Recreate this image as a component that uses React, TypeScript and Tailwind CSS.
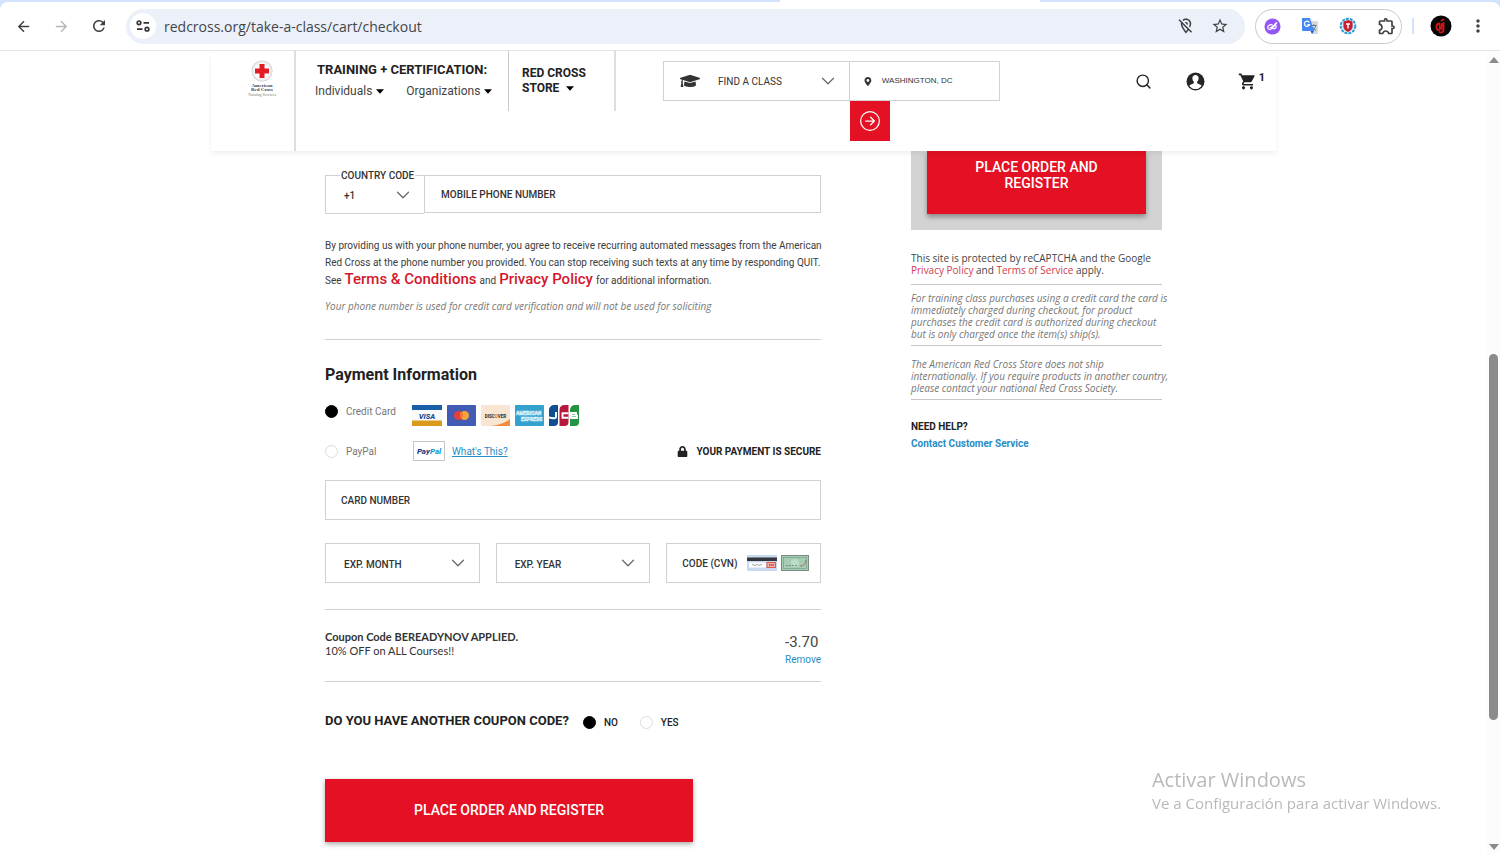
import {
  MdArrowBack,
  MdArrowForward,
  MdMoreVert,
  MdOutlineExtension,
  MdOutlineLocationOff,
  MdRefresh,
  MdShoppingCart,
  MdStarBorder,
} from "react-icons/md";
import { FaGraduationCap, FaLock, FaMapMarkerAlt } from "react-icons/fa";
import { BsArrowRightCircle } from "react-icons/bs";
import { ChevronDown, Search } from "lucide-react";

function TuneIcon() {
  return (
    <svg width="14" height="12" viewBox="0 0 14 12" fill="none" stroke="#333" strokeWidth="1.7" aria-hidden="true">
      <circle cx="3" cy="2.8" r="1.8" />
      <path d="M7.5 2.8H13M1 9.2h5.5" />
      <circle cx="11" cy="9.2" r="1.8" />
    </svg>
  );
}

function BrowserBar() {
  return (
    <div className="shrink-0 border-b border-[#e4e4e6] bg-[#d3e3fd]">
      <div className="flex h-[2px]">
        <div className="ml-[52%] h-full w-[260px] bg-white" />
      </div>
      <div className="flex h-12 items-center rounded-t-lg bg-white pr-3 pl-[15px] text-[#3c3f43]">
        <button aria-label="Back" className="w-[38px]"><MdArrowBack size={17} /></button>
        <button aria-label="Forward" className="w-[37px] text-[#b5b6b8]"><MdArrowForward size={17} /></button>
        <button aria-label="Reload" className="w-[36px]"><MdRefresh size={18} /></button>
        <div className="flex h-[35px] flex-1 items-center rounded-full bg-[#ebf0f9] pr-4 pl-1">
          <button aria-label="Site information" className="flex size-[26px] items-center justify-center rounded-full bg-white">
            <TuneIcon />
          </button>
          <input
            aria-label="Address"
            defaultValue="redcross.org/take-a-class/cart/checkout"
            className="ml-2 flex-1 font-['Open_Sans',sans-serif] text-[14px] text-[#43464a]"
          />
          <button aria-label="Location blocked" className="mr-4"><MdOutlineLocationOff size={18} /></button>
          <button aria-label="Bookmark"><MdStarBorder size={18} /></button>
        </div>
        <div className="ml-[10px] flex h-[35px] items-center gap-5 rounded-full border border-[#c9cacc] px-2">
          <svg width="17" height="17" viewBox="0 0 18 18" aria-hidden="true">
            <circle cx="9" cy="9" r="8.5" fill="#9457f5" />
            <g fill="none" stroke="#fff" strokeWidth="1.3" strokeLinecap="round">
              <path d="M9 7.4C6.500 6.300 3.500 8.400 4 10.700c.5 2 3.700 1.800 5-.2l3.500-5" />
              <path d="M6.500 10.200c2 .5 3-2.400 5.500-2.200 1.500.2 1 2.300-.5 3-1.500.6-2.500-.2-2.500-.2M13.500 5l-2 3" />
            </g>
          </svg>
          <svg width="18" height="18" viewBox="0 0 18 18" aria-hidden="true">
            <path d="M7 4h9a1 1 0 0 1 1 1v11a1 1 0 0 1-1 1h-5z" fill="#d5d9e0" />
            <path d="M10.500 8.500h5M13 7v1.500m1.800 0c-.3 2.500-2 4-3.500 5m.2-3.500c.8 1.600 2 2.700 3.500 3.500" fill="none" stroke="#657a92" />
            <path d="M1 1h8l4 13H2a1 1 0 0 1-1-1z" fill="#4688f1" />
            <path d="M11 17l2-3H9.500z" fill="#2c56b8" />
            <path d="M8.300 5.500A2.600 2.600 0 1 0 8.500 7.500H6.300" fill="none" stroke="#fff" strokeWidth="1.200" />
          </svg>
          <svg width="18" height="18" viewBox="0 0 18 18" aria-hidden="true">
            <circle cx="9" cy="9" r="7.300" fill="none" stroke="#249ad9" strokeWidth="2" strokeDasharray="3 1" />
            <circle cx="9" cy="9" r="5.800" fill="#a9d9ef" />
            <path d="M4.500 4.500L9 3l4.500 1.500v5C13.500 12 11.500 14 9 15c-2.500-1-4.500-3-4.500-5.500z" fill="#c91f32" />
            <path d="M7 7h4M9 7v4.500" stroke="#fff" strokeWidth="1.400" />
          </svg>
          <MdOutlineExtension size={20} className="-mr-1" />
        </div>
        <div className="mx-[10px] h-4 w-[2px] bg-[#d3e3fd]" />
        <svg width="22" height="22" viewBox="0 0 22 22" className="ml-[6px]" aria-hidden="true">
          <circle cx="11" cy="11" r="10.500" fill="#050505" />
          <g fill="none" stroke="#d51414" strokeWidth="1.900" strokeLinecap="round">
            <path d="M9.500 8.500c-2-.5-3.500 2-3 4.500s3 2.500 3.500.5l-.5-5M13.500 8v7c0 2-2 3-4 2" />
            <path d="M11.500 5.500l2-1M12 9l-.5 5" />
          </g>
        </svg>
        <button aria-label="Browser menu" className="ml-4"><MdMoreVert size={20} /></button>
      </div>
    </div>
  );
}

function Caret() {
  return (
    <svg width="8" height="5" viewBox="0 0 8 5" className="inline-block" aria-hidden="true">
      <path d="M0 .3h8L4 4.700z" fill="#000" />
    </svg>
  );
}

function SiteHeader() {
  return (
    <header className="relative z-10 mx-auto flex h-[100px] w-full max-w-[1065px] bg-white shadow-[0_3px_5px_rgba(0,0,0,0.06)]">
      <a href="#home" aria-label="American Red Cross Training Services" className="flex w-[85px] justify-end border-r-2 border-[#dedede] pt-2 pr-[17px]">
        <svg width="30" height="40" viewBox="0 0 30 40" aria-hidden="true">
          <defs>
            <radialGradient id="badge">
              <stop offset="65%" stopColor="#fff" />
              <stop offset="90%" stopColor="#e8e8e8" />
              <stop offset="100%" stopColor="#c4c4c4" />
            </radialGradient>
          </defs>
          <circle cx="15" cy="12" r="10.500" fill="url(#badge)" />
          <path d="M12.500 5h5v4.500H22v5h-4.500V19h-5v-4.500H8v-5h4.500z" fill="#e31b23" />
          <g textAnchor="middle" fontFamily="Liberation Serif, serif" fontWeight="700" fill="#444">
            <text x="15" y="28" fontSize="5">American</text>
            <text x="15" y="32" fontSize="5">Red Cross</text>
            <text x="15" y="37" fontSize="4" fontWeight="400" fill="#777">Training Services</text>
          </g>
        </svg>
      </a>
      <nav aria-label="Main" className="flex h-[60px]">
        <div className="w-[213px] border-r border-[#c8c8c8] pt-[11px] pl-[19px]">
          <p className="pl-[2px] text-[13px] leading-4 font-bold whitespace-nowrap">TRAINING + CERTIFICATION:</p>
          <div className="mt-1 flex gap-[22px] text-[12px] leading-[18px] text-[#444]">
            <button className="flex items-center gap-1">Individuals <Caret /></button>
            <button className="flex items-center gap-1">Organizations <Caret /></button>
          </div>
        </div>
        <button className="w-[107px] border-r-2 border-[#dedede] pl-[13px] text-left text-[12px] leading-[15px] font-bold">
          RED CROSS<br />STORE <span className="ml-1"><Caret /></span>
        </button>
      </nav>
      <form className="mt-[10px] ml-[47px] flex w-[337px] flex-col self-start" onSubmit={(e) => e.preventDefault()}>
        <div className="flex h-10 border border-[#d2d2d2] text-[#333]">
          <div className="relative flex w-[186px] items-center border-r border-[#d2d2d2]">
            <FaGraduationCap size={20} className="absolute left-4" />
            <select aria-label="Find a class" className="h-full w-full appearance-none pl-[54px] text-[10px]">
              <option>FIND A CLASS</option>
            </select>
            <ChevronDown size={22} strokeWidth={1.3} className="pointer-events-none absolute right-[10px] text-[#666]" />
          </div>
          <label className="flex min-w-0 flex-1 items-center gap-[10px] pl-[14px]">
            <FaMapMarkerAlt size={9} />
            <input aria-label="Location" defaultValue="WASHINGTON, DC" className="w-full min-w-0 font-['Liberation_Sans',Arial,sans-serif] text-[8px]" />
          </label>
        </div>
        <button aria-label="Search classes" className="ml-[187px] flex size-10 items-center justify-center bg-[#e31123] text-white">
          <BsArrowRightCircle size={20} />
        </button>
      </form>
      <div className="mr-[11px] ml-auto flex h-[60px] items-center text-[#222]">
        <button aria-label="Search" className="mr-[34px]"><Search size={17} strokeWidth={2} /></button>
        <button aria-label="Account" className="mr-[33px]">
          <svg width="19" height="19" viewBox="0 0 19 19" aria-hidden="true">
            <circle cx="9.500" cy="9.500" r="9" fill="#262626" />
            <path d="M9.500 3c-2 0-3.300 1.500-3.100 3.500.1 1.500.7 2.700 1.500 3.300v1.300c-.4.900-3.600 1.200-4.600 2.700a7.600 7.600 0 0 0 12.400 0c-1-1.500-4.200-1.800-4.600-2.700V9.800c.8-.6 1.400-1.800 1.500-3.300C12.800 4.500 11.500 3 9.500 3z" fill="#fff" />
          </svg>
        </button>
        <button aria-label="Cart, 1 item" className="flex gap-[2px]">
          <MdShoppingCart size={19} />
          <span className="text-[11px] leading-3 font-bold">1</span>
        </button>
      </div>
    </header>
  );
}

const field = "border border-[#d0d0d0] bg-white text-[10px] font-medium text-[#333]";

function SelectBox({ id, label, floating, option, className }: { id: string; label: string; floating?: boolean; option: string; className: string }) {
  return (
    <div className={`relative flex items-center ${field} ${className}`}>
      {floating && (
        <label htmlFor={id} className="absolute -top-2 left-[14px] bg-white px-px leading-4 whitespace-nowrap">{label}</label>
      )}
      <select id={id} aria-label={label} className="h-full w-full appearance-none pt-[2px] pl-[18px]">
        <option>{option}</option>
      </select>
      <ChevronDown size={22} strokeWidth={1.3} className="pointer-events-none absolute right-[10px] text-[#666]" />
    </div>
  );
}

function Radio({ id, name, checked }: { id: string; name: string; checked?: boolean }) {
  return (
    <input
      id={id}
      name={name}
      type="radio"
      defaultChecked={checked}
      className="size-[13px] shrink-0 appearance-none rounded-full border border-[#dcdcdc] checked:border-black checked:bg-black"
    />
  );
}

function CardLogos() {
  return (
    <div className="flex gap-[5px]">
      <svg width="30" height="21" viewBox="0 0 30 21" role="img" aria-label="Visa">
        <path d="M0 0h30v21H0z" fill="#fafafa" />
        <path d="M0 0h30v5H0z" fill="#195fa8" />
        <path d="M0 15.500h30V21H0z" fill="#dc9a1c" />
        <text x="15" y="13.500" fontSize="7.500" fontWeight="800" fontStyle="italic" textAnchor="middle" fill="#174b96">VISA</text>
      </svg>
      <svg width="29" height="21" viewBox="0 0 29 21" role="img" aria-label="Mastercard">
        <rect width="29" height="21" rx="1" fill="#425bb5" />
        <circle cx="11.500" cy="10.500" r="4.500" fill="#e63f38" />
        <circle cx="17.500" cy="10.500" r="4.500" fill="#f5a33a" />
        <path d="M14.500 7.200a4.500 4.500 0 0 1 0 6.600 4.500 4.500 0 0 1 0-6.600z" fill="#f0703a" />
      </svg>
      <svg width="29" height="21" viewBox="0 0 29 21" role="img" aria-label="Discover">
        <rect width="29" height="21" rx="1" fill="#f8e6d3" />
        <path d="M29 14v7H9c8-.5 15-3 20-7z" fill="#f58a3c" />
        <text x="14.500" y="12.500" fontSize="4.500" fontWeight="800" textAnchor="middle" fill="#38322f">DISC<tspan fill="#ef6b21">O</tspan>VER</text>
      </svg>
      <svg width="29" height="21" viewBox="0 0 29 21" role="img" aria-label="American Express">
        <rect width="29" height="21" rx="1" fill="#35a1cf" />
        <g fontSize="5" fontWeight="700" fill="none" stroke="#d8f1fb" strokeWidth=".6">
          <text x="1" y="9.500">AMERICAN</text>
          <text x="6" y="15.500">EXPRESS</text>
        </g>
      </svg>
      <svg width="30" height="21" viewBox="0 0 30 21" role="img" aria-label="JCB">
        <path d="M5 0h4v17a4 4 0 0 1-4 4H0V5a5 5 0 0 1 5-5z" fill="#124f91" />
        <path d="M15 0h4.500v17a4 4 0 0 1-4 4h-5V5a5 5 0 0 1 4.500-5z" fill="#b5173d" />
        <path d="M26 0h4v17a4 4 0 0 1-4 4h-5V5a5 5 0 0 1 5-5z" fill="#239344" />
        <g fill="none" stroke="#fff" strokeWidth="1.900">
          <path d="M7 7v5c0 1.500-3 1.800-7 .5M19.500 8.300h-6v4.400h6M22 8h5v2.500h-5H28V13h-6z" />
        </g>
      </svg>
    </div>
  );
}

function CvnPictures() {
  return (
    <div className="flex gap-1">
      <svg width="30" height="16" viewBox="0 0 30 16" aria-hidden="true">
        <path d="M0 0h30v16H0z" fill="#c9daf0" />
        <path d="M0 2.500h30V6H0z" fill="#33363b" />
        <path d="M2 7.500h17v5H2z" fill="#fff" />
        <path d="M5 10q1-1 2 0t2 0 2 0 2 0 2 0" fill="none" stroke="#888" strokeWidth=".8" />
        <rect x="20" y="7.500" width="8.500" height="5" fill="#f2b2a7" stroke="#dd5b48" />
        <path d="M22 10h5" stroke="#b8402f" strokeWidth="1.500" strokeDasharray="1.300 .5" />
      </svg>
      <svg width="28" height="16" viewBox="0 0 28 16" aria-hidden="true">
        <rect x=".5" y=".5" width="27" height="15" fill="#a5cdb5" stroke="#7d8a84" />
        <rect x="2.500" y="2.500" width="23" height="11" fill="none" stroke="#7aa28b" strokeWidth=".7" />
        <circle cx="14" cy="8" r="4" fill="#b9dcc7" />
        <path d="M5 10.500h12" stroke="#567866" strokeWidth=".7" strokeDasharray="2 1" />
        <path d="M19 11c4 0 5-2 6-6" fill="none" stroke="#a86c55" />
      </svg>
    </div>
  );
}

function CheckoutForm() {
  return (
    <form className="w-[496px]" onSubmit={(e) => e.preventDefault()}>
      <div className="flex items-start">
        <SelectBox id="country" label="COUNTRY CODE" floating option="+1" className="h-[39px] w-[99px] border-r-0" />
        <input aria-label="Mobile phone number" placeholder="MOBILE PHONE NUMBER" className={`h-[38px] flex-1 px-4 placeholder:text-[#333] ${field}`} />
      </div>
      <div className="mt-[23px] text-[10px] leading-[17px] whitespace-nowrap text-[#3c3c3c]">
        <p>
          By providing us with your phone number, you agree to receive recurring automated messages from the American<br />
          Red Cross at the phone number you provided. You can stop receiving such texts at any time by responding QUIT.
        </p>
        <p className="flex items-baseline gap-[3px]">
          See
          <a href="#terms" className="text-[15px] font-medium text-[#d3172b]">Terms &amp; Conditions</a>
          and
          <a href="#privacy" className="text-[15px] font-medium text-[#d3172b]">Privacy Policy</a>
          for additional information.
        </p>
      </div>
      <p className="mt-[9px] font-['Open_Sans',sans-serif] text-[10px] leading-4 text-[#777] italic">
        Your phone number is used for credit card verification and will not be used for soliciting
      </p>
      <section className="mt-[25px] border-t border-[#cfcfcf] pt-[25px]">
        <h2 className="text-[16px] leading-5 font-bold">Payment Information</h2>
        <div className="mt-5 flex h-[22px] items-start text-[10px] leading-[14px] text-[#777]">
          <Radio id="credit" name="method" checked />
          <label htmlFor="credit" className="ml-2 w-[66px]">Credit Card</label>
          <CardLogos />
        </div>
        <div className="mt-[14px] flex h-5 items-center text-[10px] text-[#777]">
          <Radio id="paypal" name="method" />
          <label htmlFor="paypal" className="ml-2 w-[67px]">PayPal</label>
          <svg width="32" height="20" viewBox="0 0 32 20" aria-hidden="true">
            <rect x=".5" y=".5" width="31" height="19" fill="#fff" stroke="#c4c4c4" />
            <text x="16" y="13" fontSize="8" fontWeight="800" fontStyle="italic" textAnchor="middle" fill="#1e3c80">Pay<tspan fill="#229bd7">Pal</tspan></text>
          </svg>
          <a href="#paypal-help" className="ml-[7px] text-[#2a8cc4] underline">What's This?</a>
          <p className="ml-auto flex items-center gap-2 font-bold text-[#222]"><FaLock size={11} /> YOUR PAYMENT IS SECURE</p>
        </div>
        <input aria-label="Card number" placeholder="CARD NUMBER" className={`mt-[19px] block h-10 w-full px-[15px] placeholder:text-[#333] ${field}`} />
        <div className="mt-[23px] grid grid-cols-3 gap-4">
          <SelectBox id="month" label="Expiration month" option="EXP. MONTH" className="h-10" />
          <SelectBox id="year" label="Expiration year" option="EXP. YEAR" className="h-10" />
          <div className={`flex h-10 items-center pr-[11px] pl-[15px] ${field}`}>
            <input aria-label="Card code" placeholder="CODE (CVN)" className="w-full min-w-0 placeholder:text-[#333]" />
            <CvnPictures />
          </div>
        </div>
      </section>
      <div className="mt-[26px] flex items-start justify-between border-y border-[#cfcfcf] pt-5 pb-[13px]">
        <div className="font-[Lato,sans-serif] text-[11px] leading-[14px] text-[#333]">
          <p className="font-bold">Coupon Code BEREADYNOV APPLIED.</p>
          <p>10% OFF on ALL Courses!!</p>
        </div>
        <div className="pt-1 leading-[17px]">
          <p className="text-[15px] text-[#444]">-3.70</p>
          <button className="block text-[10px] text-[#2a8cc4]">Remove</button>
        </div>
      </div>
      <fieldset className="mt-[31px] flex h-4 items-center text-[10px] font-medium">
        <legend className="float-left text-[13px] leading-4 font-bold">DO YOU HAVE ANOTHER COUPON CODE?</legend>
        <span className="mt-[2px] ml-[14px] flex items-center">
          <Radio id="no" name="coupon" checked />
          <label htmlFor="no" className="ml-2">NO</label>
        </span>
        <span className="mt-[2px] ml-[22px] flex items-center">
          <Radio id="yes" name="coupon" />
          <label htmlFor="yes" className="ml-2">YES</label>
        </span>
      </fieldset>
      <button className="mt-[50px] block h-[63px] w-[368px] bg-[#e31123] text-[14px] font-medium text-white shadow-[0_2px_5px_rgba(0,0,0,0.35)]">
        PLACE ORDER AND REGISTER
      </button>
    </form>
  );
}

function Sidebar() {
  const note = "border-b border-[#c6c6c6] font-['Open_Sans',sans-serif] text-[10px] leading-3";
  return (
    <aside className="w-[251px]">
      <div className="bg-[#d3d3d3] px-4 pb-4">
        <button className="block h-[63px] w-full bg-[#e31123] pb-[15px] text-[14px] leading-4 font-medium text-white shadow-[0_3px_5px_rgba(0,0,0,0.35)]">
          PLACE ORDER AND<br />REGISTER
        </button>
      </div>
      <p className={`${note} pt-[22px] pb-2 text-[#444]`}>
        This site is protected by reCAPTCHA and the Google <a href="#google-privacy" className="text-[#d33a4c]">Privacy Policy</a> and{" "}
        <a href="#google-terms" className="text-[#d33a4c]">Terms of Service</a> apply.
      </p>
      <p className={`${note} pt-[7px] pb-[5px] whitespace-nowrap text-[#777] italic`}>
        For training class purchases using a credit card the card is<br />
        immediately charged during checkout, for product<br />
        purchases the credit card is authorized during checkout<br />
        but is only charged once the item(s) ship(s).
      </p>
      <p className={`${note} pt-3 pb-[5px] whitespace-nowrap text-[#777] italic`}>
        The American Red Cross Store does not ship<br />
        internationally. If you require products in another country,<br />
        please contact your national Red Cross Society.
      </p>
      <h3 className="mt-5 text-[10px] leading-[14px] font-bold">NEED HELP?</h3>
      <a href="#support" className="mt-[3px] block text-[10px] leading-[14px] font-bold text-[#2a8cc4]">Contact Customer Service</a>
    </aside>
  );
}

function Scrollbar() {
  return (
    <div aria-hidden="true" className="flex w-[13px] shrink-0 flex-col items-center bg-[#fcfcfc] pt-[6px] pb-1">
      <svg width="10" height="6" viewBox="0 0 10 6" className="shrink-0"><path d="M0 6l5-6 5 6z" fill="#8b8b8b" /></svg>
      <div className="grow-[291]" />
      <div className="w-[9px] grow-[366] rounded-full bg-[#8b8b8b]" />
      <div className="grow-[124]" />
      <svg width="10" height="6" viewBox="0 0 10 6" className="shrink-0"><path d="M0 0h10L5 6z" fill="#8b8b8b" /></svg>
    </div>
  );
}

export default function App() {
  return (
    <div className="flex h-screen flex-col overflow-hidden bg-white font-[Roboto,sans-serif] text-[#222]">
      <BrowserBar />
      <div className="flex min-h-0 flex-1">
        <div className="min-w-0 flex-1 overflow-hidden">
          <SiteHeader />
          <main className="mx-auto flex max-w-[837px] items-start justify-between">
            <div className="pt-6">
              <CheckoutForm />
            </div>
            <Sidebar />
          </main>
        </div>
        <Scrollbar />
      </div>
      <div className="pointer-events-none fixed right-[59px] bottom-10 font-['Open_Sans',sans-serif] text-[#b9b9b9]">
        <p className="text-[20px] leading-6">Activar Windows</p>
        <p className="text-[15px] leading-[22px]">Ve a Configuración para activar Windows.</p>
      </div>
    </div>
  );
}
